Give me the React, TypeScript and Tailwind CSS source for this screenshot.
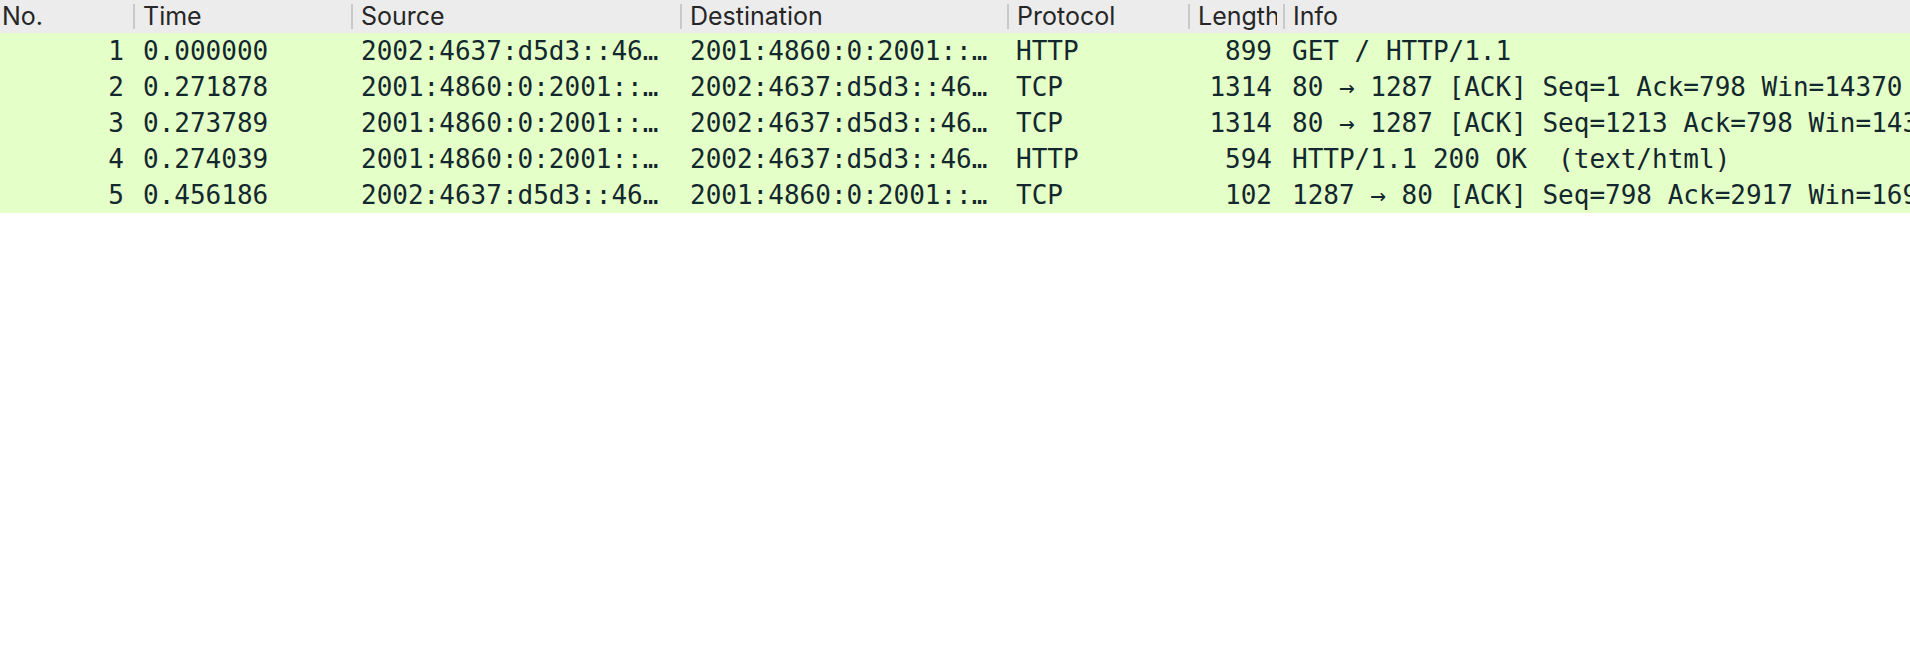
import React from 'react';

interface Packet {
  no: number;
  time: string;
  source: string;
  destination: string;
  protocol: string;
  length: number;
  info: string;
}

const packets: Packet[] = [
  { no: 1, time: '0.000000', source: '2002:4637:d5d3::46…', destination: '2001:4860:0:2001::…', protocol: 'HTTP', length: 899, info: 'GET / HTTP/1.1' },
  { no: 2, time: '0.271878', source: '2001:4860:0:2001::…', destination: '2002:4637:d5d3::46…', protocol: 'TCP', length: 1314, info: '80 → 1287 [ACK] Seq=1 Ack=798 Win=14370 Len=1212' },
  { no: 3, time: '0.273789', source: '2001:4860:0:2001::…', destination: '2002:4637:d5d3::46…', protocol: 'TCP', length: 1314, info: '80 → 1287 [ACK] Seq=1213 Ack=798 Win=14370 Len=1212' },
  { no: 4, time: '0.274039', source: '2001:4860:0:2001::…', destination: '2002:4637:d5d3::46…', protocol: 'HTTP', length: 594, info: 'HTTP/1.1 200 OK  (text/html)' },
  { no: 5, time: '0.456186', source: '2002:4637:d5d3::46…', destination: '2001:4860:0:2001::…', protocol: 'TCP', length: 102, info: '1287 → 80 [ACK] Seq=798 Ack=2917 Win=16944 Len=0' },
];

const columns = ['No.', 'Time', 'Source', 'Destination', 'Protocol', 'Length', 'Info'];

// column widths taken from the header separators
const grid = 'grid grid-cols-[133px_218px_329px_327px_181px_95px_minmax(0,1fr)]';

const App: React.FC = () => {
  return (
    <div className="w-[1910px] h-[672px] bg-white overflow-hidden">
      {/* Header */}
      <div className={`${grid} h-[33px] bg-[#ececec] text-[#262626] font-['Inter',sans-serif] text-[25px]`}>
        {columns.map((col, i) => (
          <div key={col} className="flex items-center overflow-hidden whitespace-nowrap pr-[6px]">
            {i > 0 && <div className="w-[2px] h-[25px] bg-[#c9c9c9] shrink-0" />}
            <span className={`overflow-hidden min-w-0 ${i > 0 ? 'pl-[8px]' : 'pl-[2px]'}`}>{col}</span>
          </div>
        ))}
      </div>

      {/* Packet rows */}
      <div className="font-['DejaVu_Sans_Mono',monospace] text-[26px] text-[#12272e]">
        {packets.map(p => (
          <div key={p.no} className={`${grid} h-[36px] bg-[#e4ffc7] items-center whitespace-pre`}>
            <div className="text-right pr-[9px] overflow-hidden">{p.no}</div>
            <div className="pl-[10px] overflow-hidden">{p.time}</div>
            <div className="pl-[10px] overflow-hidden">{p.source}</div>
            <div className="pl-[10px] overflow-hidden">{p.destination}</div>
            <div className="pl-[9px] overflow-hidden">{p.protocol}</div>
            <div className="text-right pr-[11px] overflow-hidden">{p.length}</div>
            <div className="pl-[9px] overflow-hidden">{p.info}</div>
          </div>
        ))}
      </div>
    </div>
  );
};

export default App;
